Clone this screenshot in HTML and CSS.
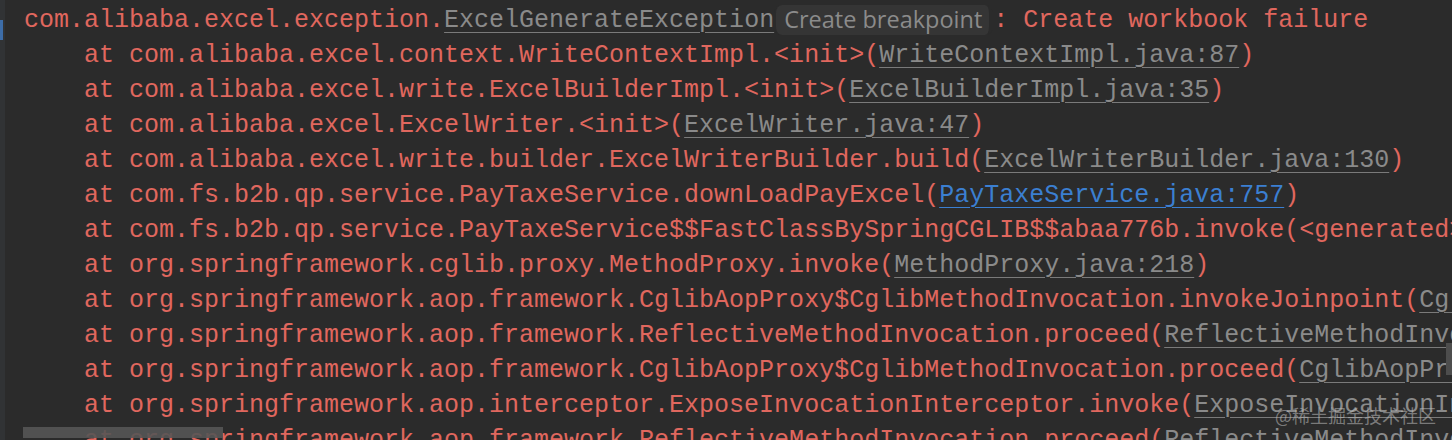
FILE: index.html
```html
<!DOCTYPE html>
<html>
<head>
<meta charset="utf-8">
<link rel="stylesheet" href="styles.css">
</head>
<body>
<div class="editor">
  <div class="gutter"><div class="gutter-mark"></div></div>
  <div class="console">
    <div class="line">com.alibaba.excel.exception.<a class="link">ExcelGenerateException</a><span class="inlay">Create breakpoint</span>: Create workbook failure</div>
    <div class="line">    at com.alibaba.excel.context.WriteContextImpl.&lt;init&gt;(<a class="link">WriteContextImpl.java:87</a>)</div>
    <div class="line">    at com.alibaba.excel.write.ExcelBuilderImpl.&lt;init&gt;(<a class="link">ExcelBuilderImpl.java:35</a>)</div>
    <div class="line">    at com.alibaba.excel.ExcelWriter.&lt;init&gt;(<a class="link">ExcelWriter.java:47</a>)</div>
    <div class="line">    at com.alibaba.excel.write.builder.ExcelWriterBuilder.build(<a class="link">ExcelWriterBuilder.java:130</a>)</div>
    <div class="line">    at com.fs.b2b.qp.service.PayTaxeService.downLoadPayExcel(<a class="link link-blue">PayTaxeService.java:757</a>)</div>
    <div class="line">    at com.fs.b2b.qp.service.PayTaxeService$$FastClassBySpringCGLIB$$abaa776b.invoke(&lt;generated&gt;)</div>
    <div class="line">    at org.springframework.cglib.proxy.MethodProxy.invoke(<a class="link">MethodProxy.java:218</a>)</div>
    <div class="line">    at org.springframework.aop.framework.CglibAopProxy$CglibMethodInvocation.invokeJoinpoint(<a class="link">CglibAopProxy.java:749</a>)</div>
    <div class="line">    at org.springframework.aop.framework.ReflectiveMethodInvocation.proceed(<a class="link">ReflectiveMethodInvocation.java:163</a>)</div>
    <div class="line">    at org.springframework.aop.framework.CglibAopProxy$CglibMethodInvocation.proceed(<a class="link">CglibAopProxy.java:688</a>)</div>
    <div class="line">    at org.springframework.aop.interceptor.ExposeInvocationInterceptor.invoke(<a class="link">ExposeInvocationInterceptor.java:92</a>)</div>
    <div class="line">    at org.springframework.aop.framework.ReflectiveMethodInvocation.proceed(<a class="link">ReflectiveMethodInvocation.java:186</a>)</div>
  </div>
  <div class="vthumb"></div>
  <div class="hscroll"></div>
  <div class="watermark">@稀土掘金技术社区</div>
</div>
</body>
</html>
```

FILE: styles.css
```css
html, body {
  margin: 0;
  padding: 0;
  background: #2b2b2b;
  overflow: hidden;
}

.editor {
  position: relative;
  display: flex;
  width: 1452px;
  height: 440px;
  overflow: hidden;
  background: #2b2b2b;
}

.gutter {
  flex: 0 0 5px;
  background: #313335;
  padding-top: 20px;
}

.gutter-mark {
  width: 3px;
  height: 20px;
  background: #3d6da8;
}

.console {
  flex: 1;
  min-width: 0;
  padding: 2.5px 0 0 19px;
  font-family: "Liberation Mono", "Courier New", monospace;
  font-size: 25px;
  line-height: 35px;
  color: #e0675e;
  overflow: hidden;
}

.line {
  height: 35px;
  white-space: pre;
}

.link {
  color: #8a8a8a;
  text-decoration: underline;
  text-decoration-color: #7a7a7a;
  text-decoration-thickness: 1px;
  text-underline-offset: 5px;
}

.link-blue {
  color: #3b7fd1;
  text-decoration-color: #3b7fd1;
}

.inlay {
  display: inline-block;
  box-sizing: border-box;
  width: 219px;
  height: 30px;
  padding: 0 0 0 8px;
  border: 0 solid #2b2b2b;
  border-width: 0 4px 0 2px;
  border-radius: 8px;
  background: #353535;
  font-family: "Open Sans", "Noto Sans", sans-serif;
  font-size: 23.5px;
  line-height: 29px;
  color: #8b8b8b;
  vertical-align: middle;
}

.vthumb {
  position: absolute;
  right: 0;
  top: 343px;
  width: 6px;
  height: 32px;
  background: #4d4d4d;
}

.hscroll {
  position: absolute;
  left: 23px;
  top: 427px;
  width: 200px;
  height: 11px;
  background: rgba(85, 85, 85, 0.9);
}

.watermark {
  position: absolute;
  left: 1275px;
  top: 402px;
  font-family: "Noto Sans CJK SC", "Noto Sans", sans-serif;
  font-size: 18px;
  line-height: 26px;
  color: rgba(190, 190, 190, 0.55);
  white-space: nowrap;
}
```
